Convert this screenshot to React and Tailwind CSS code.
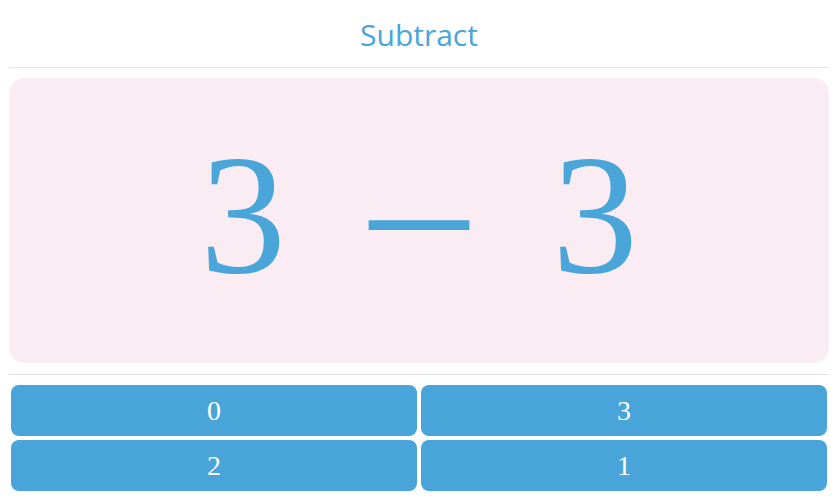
import React from 'react';

export default function App() {
  const answers = [0, 3, 2, 1];

  return (
    <div className="w-[840px] h-[501px] bg-white pl-[9px] pr-[11px]">
      {/* title */}
      <div className="h-[68px] flex items-center justify-center border-b border-[#dde3ea]">
        <h1 className="text-[30px] text-[#4aa5d9] font-['Open_Sans',sans-serif] pt-[2px]">Subtract</h1>
      </div>

      {/* problem */}
      <div className="mt-[10px] h-[285px] rounded-[15px] bg-[#f9edf3] flex items-center justify-center font-[family-name:'Liberation_Serif','Times_New_Roman',serif] text-[#4aa5d9] text-[172px] leading-none pb-[14px]">
        <span>3</span>
        <span className="mx-[84px] text-[196px] -translate-y-[9px]">–</span>
        <span>3</span>
      </div>

      {/* answers */}
      <div className="mt-[11px] border-t border-[#dde3ea] pt-[10px] px-[2px] grid grid-cols-2 gap-[4px]">
        {answers.map((n) => (
          <button
            key={n}
            className="h-[51px] rounded-[8px] bg-[#49a5d9] text-white text-[28px] font-[family-name:'Liberation_Serif','Times_New_Roman',serif] flex items-center justify-center"
          >
            {n}
          </button>
        ))}
      </div>
    </div>
  );
}
